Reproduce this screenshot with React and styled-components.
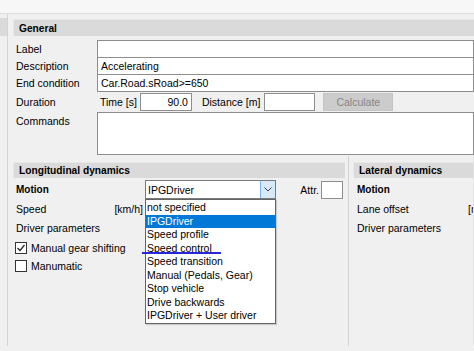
import React from 'react';
import styled, { createGlobalStyle } from 'styled-components';

const Global = createGlobalStyle`
  html, body { margin: 0; padding: 0; }
  body {
    background: #f0f0f0;
    font-family: "Liberation Sans", Arial, sans-serif;
    font-size: 10.5px;
    color: #000;
  }
  * { box-sizing: border-box; }
`;

const Page = styled.div`
  width: 474px;
  height: 351px;
  overflow: hidden;
  display: flex;
  flex-direction: column;
  background: #f0f0f0;
`;

const TopBar = styled.div`
  flex: none;
  height: 14px;
  background: #f7f7f7;
  border-bottom: 1px solid #dedede;
`;

const Body = styled.div`
  flex: 1;
  display: flex;
  min-height: 0;
  margin-bottom: 5px;
`;

const LeftStrip = styled.div`
  flex: none;
  width: 8px;
  padding-top: 4px;
  border-right: 1px solid #d4d4d4;
`;

const StripHeader = styled.div`
  height: 18px;
  background: #dadada;
`;

const Main = styled.div`
  flex: 1;
  min-width: 0;
  margin-left: 5px;
  display: flex;
  flex-direction: column;
`;

const SectionHeader = styled.div`
  flex: none;
  height: ${p => p.$h}px;
  margin-top: ${p => p.$mt || 0}px;
  display: flex;
  align-items: center;
  padding-left: 5px;
  background: #dadada;
  border-top: 1px solid #e8e8e8;
  border-left: 1px solid #e8e8e8;
  font-weight: bold;
  font-size: 10.2px;
  white-space: nowrap;
`;

const Form = styled.div`
  margin-top: 4px;
  display: flex;
  flex-direction: column;
`;

const Row = styled.div`
  display: flex;
  align-items: ${p => (p.$top ? 'flex-start' : 'center')};
  height: ${p => p.$h}px;
  margin-bottom: ${p => p.$mb || 0}px;
  margin-top: ${p => p.$mt || 0}px;
  white-space: nowrap;
`;

const Label = styled.div`
  flex: none;
  width: ${p => p.$w || 84}px;
  padding-left: ${p => p.$pl ?? 3}px;
  padding-right: 2px;
  padding-top: ${p => p.$pt || 0}px;
  font-weight: ${p => (p.$bold ? 'bold' : 'normal')};
  font-size: ${p => (p.$bold ? '10px' : '10.5px')};
  display: flex;
  justify-content: space-between;
  align-items: center;
`;

const TextBox = styled.div`
  flex: ${p => (p.$w ? 'none' : '1')};
  width: ${p => (p.$w ? `${p.$w}px` : 'auto')};
  height: ${p => p.$h || 18}px;
  background: #fff;
  border: 1px solid #8e8e8e;
  padding: ${p => (p.$right ? '0 3px 0 0' : '0 3px')};
  display: flex;
  align-items: ${p => (p.$top ? 'flex-start' : 'center')};
  justify-content: ${p => (p.$right ? 'flex-end' : 'flex-start')};
  margin-left: ${p => p.$ml || 0}px;
`;

const Caption = styled.span`
  margin-left: ${p => p.$ml || 0}px;
  margin-right: ${p => p.$mr || 0}px;
`;

const Button = styled.div`
  width: 70px;
  height: 18px;
  margin-left: 8px;
  background: #cccccc;
  border: 1px solid #c4c4c4;
  color: #858585;
  display: flex;
  align-items: center;
  justify-content: center;
`;

const Dynamics = styled.div`
  flex: 1;
  display: flex;
  margin-top: 1px;
  min-height: 0;
`;

const LeftCol = styled.div`
  flex: none;
  width: 332px;
  padding-top: 6px;
  display: flex;
  flex-direction: column;
`;

const RightCol = styled.div`
  flex: 1;
  min-width: 0;
  margin-left: 3px;
  padding-top: 6px;
  padding-left: 4px;
  border-left: 1px solid #d2d2d2;
  border-right: 1px solid #e4e4e4;
  overflow: hidden;
  display: flex;
  flex-direction: column;
`;

const SelectWrap = styled.div`
  position: relative;
  flex: none;
  width: 131px;
  height: 19px;
`;

const SelectBox = styled.div`
  height: 19px;
  background: #fff;
  border: 1px solid #7a7a7a;
  display: flex;
  align-items: center;
  padding-left: 2px;
`;

const SelectValue = styled.span`
  flex: 1;
`;

const ArrowBtn = styled.div`
  width: 15px;
  height: 17px;
  background: #d7e8f6;
  border-left: 1px solid #7eb4ea;
  display: flex;
  align-items: center;
  justify-content: center;
`;

const DropList = styled.div`
  position: absolute;
  top: 19px;
  left: 0;
  width: 131px;
  height: 125px;
  background: #fff;
  border: 1px solid #646464;
  padding-top: 1px;
  z-index: 5;
  box-shadow: 1px 1px 1px rgba(0, 0, 0, 0.15);
`;

const DropItem = styled.div`
  height: 13.5px;
  line-height: 13.5px;
  padding-left: 1px;
  white-space: nowrap;
  background: ${p => (p.$sel ? '#0078d7' : 'transparent')};
  color: ${p => (p.$sel ? '#fff' : '#000')};
`;

const Annotation = styled.div`
  position: absolute;
  left: -3px;
  top: 72px;
  width: 79px;
  height: 2px;
  background: #2828d8;
  z-index: 6;
`;

const AttrBlock = styled.div`
  margin-left: auto;
  margin-right: 2px;
  display: flex;
  align-items: center;
`;

const CheckBox = styled.div`
  flex: none;
  width: 12px;
  height: 12px;
  margin-left: 2px;
  margin-right: 4px;
  background: #fff;
  border: 1px solid #333;
  display: flex;
  align-items: center;
  justify-content: center;
`;

const Chevron = () => (
  <svg width="8" height="5" viewBox="0 0 8 5">
    <polyline points="0.5,0.5 4,4 7.5,0.5" fill="none" stroke="#404040" strokeWidth="1" />
  </svg>
);

const Check = () => (
  <svg width="10" height="10" viewBox="0 0 10 10">
    <polyline points="1.5,5 4,7.5 8.5,2" fill="none" stroke="#222" strokeWidth="1.2" />
  </svg>
);

const options = [
  'not specified',
  'IPGDriver',
  'Speed profile',
  'Speed control',
  'Speed transition',
  'Manual (Pedals, Gear)',
  'Stop vehicle',
  'Drive backwards',
  'IPGDriver + User driver',
];

export default function App() {
  return (
    <Page>
      <Global />
      <TopBar />
      <Body>
        <LeftStrip>
          <StripHeader />
        </LeftStrip>
        <Main>
          <SectionHeader $h={17} $mt={5}>General</SectionHeader>
          <Form>
            <Row $h={18} $mb={-1}>
              <Label>Label</Label>
              <TextBox />
            </Row>
            <Row $h={18} $mb={-1}>
              <Label>Description</Label>
              <TextBox>Accelerating</TextBox>
            </Row>
            <Row $h={18}>
              <Label>End condition</Label>
              <TextBox>Car.Road.sRoad&gt;=650</TextBox>
            </Row>
            <Row $h={20}>
              <Label>Duration</Label>
              <Caption $ml={3}>Time [s]</Caption>
              <TextBox $w={52} $ml={3} $right>90.0</TextBox>
              <Caption $ml={10}>Distance [m]</Caption>
              <TextBox $w={51} $ml={4} />
              <Button>Calculate</Button>
            </Row>
            <Row $h={43} $top>
              <Label $pt={3}>Commands</Label>
              <TextBox $h={43} />
            </Row>
          </Form>
          <Dynamics>
            <LeftCol>
              <SectionHeader $h={16}>Longitudinal dynamics</SectionHeader>
              <Row $h={19} $mt={2}>
                <Label $w={132} $bold>Motion</Label>
                <SelectWrap>
                  <SelectBox>
                    <SelectValue>IPGDriver</SelectValue>
                    <ArrowBtn><Chevron /></ArrowBtn>
                  </SelectBox>
                  <DropList>
                    {options.map((o, i) => (
                      <DropItem key={o} $sel={i === 1}>{o}</DropItem>
                    ))}
                  </DropList>
                  <Annotation />
                </SelectWrap>
                <AttrBlock>
                  <Caption $mr={2}>Attr.</Caption>
                  <TextBox $w={22} />
                </AttrBlock>
              </Row>
              <Row $h={19}>
                <Label $w={132}>
                  <span>Speed</span>
                  <span>[km/h]</span>
                </Label>
              </Row>
              <Row $h={19}>
                <Label $w={132}>Driver parameters</Label>
              </Row>
              <Row $h={18} $mt={2}>
                <CheckBox><Check /></CheckBox>
                <span>Manual gear shifting</span>
              </Row>
              <Row $h={18}>
                <CheckBox />
                <span>Manumatic</span>
              </Row>
            </LeftCol>
            <RightCol>
              <SectionHeader $h={16}>Lateral dynamics</SectionHeader>
              <Row $h={19} $mt={2}>
                <Label $w={110} $pl={4} $bold>Motion</Label>
              </Row>
              <Row $h={19}>
                <Label $w={115} $pl={4}>Lane offset</Label>
                <span>[m]</span>
              </Row>
              <Row $h={19}>
                <Label $w={115} $pl={4}>Driver parameters</Label>
              </Row>
            </RightCol>
          </Dynamics>
        </Main>
      </Body>
    </Page>
  );
}
